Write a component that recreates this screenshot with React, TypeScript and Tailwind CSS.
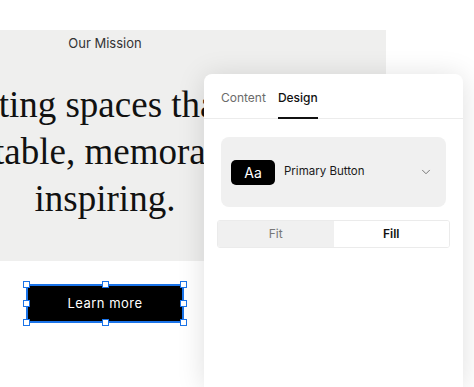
import { ChevronDown } from "lucide-react";

// ─── Selection handle ─────────────────────────────────────────────────────────
function Handle({ className }: { className: string }) {
  return (
    <span
      className={`absolute w-[7px] h-[7px] bg-white border-[1.5px] border-[#1a73e8] ${className}`}
    />
  );
}

// ─── Canvas preview (left) ────────────────────────────────────────────────────
function Preview() {
  return (
    <div>
      <div className="mt-[30px] w-[386px] h-[231px] bg-[#efefee] overflow-hidden">
        <div className="w-[210px] flex flex-col items-center">
          <p className="pt-[5px] text-[13px] leading-[16px] text-[#333] font-['Inter',sans-serif]">
            Our Mission
          </p>
          <div className="mt-[30px] flex flex-col items-center text-[37px] leading-[47px] text-[#111] font-['Liberation_Serif',serif]">
            <span className="whitespace-nowrap">Creating spaces that are</span>
            <span className="whitespace-nowrap">comfortable, memorable, and</span>
            <span className="whitespace-nowrap">inspiring.</span>
          </div>
        </div>
      </div>

      <div className="pl-[26px] pt-[23px]">
        <div className="relative w-[158px] h-[39px] bg-black border-2 border-[#1a73e8] flex items-center justify-center">
          <span className="text-[13px] tracking-[0.5px] text-white font-['Inter',sans-serif]">
            Learn more
          </span>
          <Handle className="-left-[5px] -top-[5px]" />
          <Handle className="left-[74px] -top-[5px]" />
          <Handle className="-right-[5px] -top-[5px]" />
          <Handle className="-left-[5px] top-[14px]" />
          <Handle className="-right-[5px] top-[14px]" />
          <Handle className="-left-[5px] -bottom-[5px]" />
          <Handle className="left-[74px] -bottom-[5px]" />
          <Handle className="-right-[5px] -bottom-[5px]" />
        </div>
      </div>
    </div>
  );
}

// ─── Design panel (right) ─────────────────────────────────────────────────────
function DesignPanel() {
  return (
    <div className="absolute left-[204px] top-[74px] bottom-0 w-[259px] bg-white rounded-t-[8px] shadow-[0_2px_28px_rgba(0,0,0,0.13)] font-['Inter',sans-serif]">
      {/* Tabs */}
      <div className="h-[45px] border-b border-[#ececec] px-[17px] flex gap-[12px]">
        <div className="pt-[3px] flex items-center text-[12px] text-[#6b6b6b]">Content</div>
        <div className="relative pt-[3px] flex items-center text-[12px] font-medium text-[#111]">
          Design
          <span className="absolute left-0 right-0 -bottom-[1px] h-[2px] bg-[#111]" />
        </div>
      </div>

      {/* Style picker */}
      <div className="mx-[17px] mt-[18px] h-[70px] rounded-[8px] bg-[#f0f0f0] flex items-center pl-[10px] pr-[13px]">
        <div className="w-[44px] h-[25px] rounded-[5px] bg-black flex items-center justify-center text-[14px] text-white">
          Aa
        </div>
        <span className="ml-[9px] text-[11.5px] text-[#1a1a1a]">Primary Button</span>
        <ChevronDown className="ml-auto w-[14px] h-[14px] text-[#666]" strokeWidth={1.5} />
      </div>

      {/* Fit / Fill */}
      <div className="mx-[13px] mt-[13px] h-[28px] grid grid-cols-2 border border-[#ebebeb] rounded-[3px] overflow-hidden text-[12px]">
        <div className="bg-[#f0f0f0] flex items-center justify-center text-[#777]">Fit</div>
        <div className="bg-white flex items-center justify-center font-semibold text-[#111]">Fill</div>
      </div>
    </div>
  );
}

export default function App() {
  return (
    <div className="relative w-[474px] h-[387px] bg-white overflow-hidden">
      <Preview />
      <DesignPanel />
    </div>
  );
}
